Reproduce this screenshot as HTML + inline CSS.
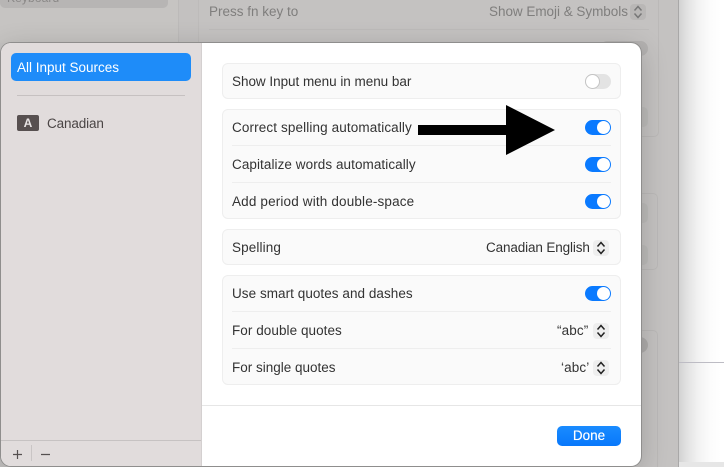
<!DOCTYPE html>
<html><head><meta charset="utf-8">
<style>
html,body{margin:0;padding:0}
body{width:724px;height:467px;overflow:hidden;position:relative;background:#fff;font-family:"Liberation Sans",sans-serif;font-size:13.5px;color:#333}
div,span,svg{position:absolute;box-sizing:border-box}
.t{white-space:nowrap;line-height:16px;letter-spacing:.12px;margin-top:1px}
.g{left:222px;width:399px;background:#fafafa;border:1px solid #eeeeee;border-radius:6px}
.d{left:232px;width:379px;height:1px;background:#eeeeee}
.tg{left:585px;width:26px;height:15px;border-radius:8px;background:#0a7aff}
.tg:after{content:"";position:absolute;left:11.75px;top:.75px;width:13.5px;height:13.5px;border-radius:50%;background:#fff}
.st{width:16px;height:16px;background:#eeeeee;border-radius:4px}
.bs{background:#bcbbb9}
</style></head><body>
<div style="left:679px;top:0;width:45px;height:467px;background:linear-gradient(90deg,#d2d2d2 0,#e2e2e2 8px,#f3f3f3 20px,#fcfcfc 32px,#fff 42px)"></div>
<div style="left:679px;top:362px;width:45px;height:1px;background:#bdbcc4"></div>
<div style="left:679px;top:462px;width:45px;height:5px;background:#e6e6e6"></div>
<div style="left:0;top:0;width:679px;height:467px;background:#c4c2c1;border-right:1px solid #a9a8a8"></div>
<div style="left:0;top:0;width:179px;height:43px;background:#c6c4c2;border-right:1px solid #bcbab9"></div>
<div style="left:0;top:0;width:168px;height:8px;background:#b7b5b4;border-radius:0 0 5px 5px;overflow:hidden"></div>
<div class="t" style="left:7px;top:-10px;color:#8a8887;font-size:12px;margin:0">Keyboard</div>
<div style="left:179px;top:0;width:20px;height:43px;background:#c3c1c0;border-right:1px solid #bdbbba"></div>
<div class="t" style="left:209px;top:3px;color:#7f7e7d;letter-spacing:0">Press fn key to</div>
<div class="t" style="left:489px;top:3px;color:#7f7e7d;letter-spacing:-.03px">Show Emoji &amp; Symbols</div>
<div style="left:630px;top:4px;width:16px;height:16px;background:#b9b7b6;border-radius:4px"></div>
<svg style="left:630px;top:4px" width="16" height="16" fill="none" stroke="#777" stroke-width="1.5"><path d="M4.5 6.5L8 2.5L11.5 6.5M4.5 9.5L8 13.5L11.5 9.5"/></svg>
<div style="left:209px;top:29px;width:440px;height:1px;background:#bdbbba"></div>
<div style="left:600px;top:41px;width:48px;height:15px;border-radius:8px;background:#b4b2b1"></div>
<div style="left:640px;top:0;width:19px;height:137px;border-right:1px solid #bbb9b8;border-bottom:1px solid #bbb9b8;border-radius:0 0 5px 0"></div>
<div class="bs" style="left:630px;top:107px;width:18px;height:20px;border-radius:5px"></div>
<div style="left:630px;top:193px;width:28px;height:77px;border:1px solid #bbb9b8;border-left:0;border-radius:0 5px 5px 0"></div>
<div class="bs" style="left:630px;top:203px;width:18px;height:20px;border-radius:5px"></div>
<div class="bs" style="left:630px;top:245px;width:18px;height:20px;border-radius:5px"></div>
<div style="left:630px;top:330px;width:28px;height:137px;border:1px solid #bbb9b8;border-left:0;border-bottom:0;border-radius:0 5px 0 0"></div>
<div style="left:630px;top:337px;width:18px;height:16px;border-radius:8px;background:#aeacab"></div>

<div style="left:1px;top:43px;width:640px;height:423px;border-radius:10px;overflow:hidden;background:#fff;box-shadow:0 0 0 1px #8f8e8d,0 6px 28px rgba(0,0,0,.2)">
  <div style="left:0;top:0;width:201px;height:423px;background:#e1dcdc;border-right:1px solid #d4d0d0"></div>
</div>

<div style="left:11px;top:53px;width:180px;height:28px;background:#1e8cf9;border-radius:5px"></div>
<div class="t" style="left:17px;top:59px;color:#fff;letter-spacing:0">All Input Sources</div>
<div style="left:17px;top:95px;width:168px;height:1px;background:#c6c1c1"></div>
<div style="left:17px;top:115px;width:22px;height:16px;background:#575050;border-radius:2px;color:#e8e4e4;font-size:12px;font-weight:bold;line-height:16px;text-align:center">A</div>
<div class="t" style="left:47px;top:115px;color:#4a4545;letter-spacing:-.13px">Canadian</div>
<div style="left:1px;top:440px;width:200px;height:1px;background:#c6c2c2"></div>
<svg style="left:12px;top:448px" width="46" height="13" fill="none" stroke="#555050" stroke-width="1.2"><path d="M1 6.5H10M5.5 2V11M29 6.5H38"/></svg>
<div style="left:31px;top:445px;width:1px;height:16px;background:#c9c5c5"></div>

<div class="g" style="top:63px;height:36px"></div>
<div class="t" style="left:232px;top:73px;letter-spacing:-.03px">Show Input menu in menu bar</div>
<div style="left:585px;top:74px;width:26px;height:15px;border-radius:8px;background:#e3e3e3"></div>
<div style="left:585px;top:74px;width:15px;height:15px;border-radius:50%;background:#fff;border:1px solid #c4c4c4"></div>

<div class="g" style="top:109px;height:110px"></div>
<div class="d" style="top:145px"></div>
<div class="d" style="top:182px"></div>
<div class="t" style="left:232px;top:119px">Correct spelling automatically</div>
<div class="t" style="left:232px;top:156px;letter-spacing:.07px">Capitalize words automatically</div>
<div class="t" style="left:232px;top:193px;letter-spacing:.16px">Add period with double-space</div>
<div class="tg" style="top:120px"></div>
<div class="tg" style="top:157px"></div>
<div class="tg" style="top:194px"></div>

<div class="g" style="top:229px;height:36px"></div>
<div class="t" style="left:232px;top:239px">Spelling</div>
<div class="t" style="left:486px;top:239px;letter-spacing:-.13px">Canadian English</div>
<div class="st" style="left:593px;top:240px"></div>
<svg style="left:593px;top:240px" width="16" height="16" fill="none" stroke="#222" stroke-width="1.5"><path d="M4.5 6.5L8 2.5L11.5 6.5M4.5 9.5L8 13.5L11.5 9.5"/></svg>

<div class="g" style="top:275px;height:110px"></div>
<div class="d" style="top:311px"></div>
<div class="d" style="top:348px"></div>
<div class="t" style="left:232px;top:285px;letter-spacing:.05px">Use smart quotes and dashes</div>
<div class="t" style="left:232px;top:322px;letter-spacing:.06px">For double quotes</div>
<div class="t" style="left:232px;top:359px;letter-spacing:0">For single quotes</div>
<div class="tg" style="top:286px"></div>
<div class="t" style="left:557px;top:322px">“abc”</div>
<div class="st" style="left:593px;top:323px"></div>
<svg style="left:593px;top:323px" width="16" height="16" fill="none" stroke="#222" stroke-width="1.5"><path d="M4.5 6.5L8 2.5L11.5 6.5M4.5 9.5L8 13.5L11.5 9.5"/></svg>
<div class="t" style="left:561px;top:359px">‘abc’</div>
<div class="st" style="left:593px;top:360px"></div>
<svg style="left:593px;top:360px" width="16" height="16" fill="none" stroke="#222" stroke-width="1.5"><path d="M4.5 6.5L8 2.5L11.5 6.5M4.5 9.5L8 13.5L11.5 9.5"/></svg>

<div style="left:202px;top:405px;width:439px;height:1px;background:#e6e6e6"></div>
<div style="left:557px;top:426px;width:64px;height:20px;border-radius:5px;background:linear-gradient(#1a8cff,#0878fb);color:#fff;line-height:20px;text-align:center;text-shadow:0 0 .4px #fff">Done</div>

<svg style="left:418px;top:105px" width="138" height="50"><path d="M0 20H88V0L137 25L88 50V30H0Z" fill="#000"/></svg>
</body></html>
